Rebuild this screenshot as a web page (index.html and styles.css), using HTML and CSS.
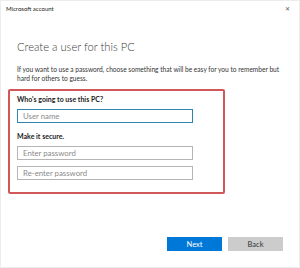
FILE: index.html
```html
<!DOCTYPE html>
<html lang="en">
<head>
    <meta charset="UTF-8">
    <title>Microsoft account</title>
    <link rel="stylesheet" href="styles.css">
</head>
<body>
    <div class="window">
        <!-- Barre de titre -->
        <div class="titlebar">
            <span class="title">Microsoft account</span>
            <span class="close">&#x2715;</span>
        </div>

        <div class="content">
            <h1>Create a user for this PC</h1>
            <p class="intro">If you want to use a password, choose something that will be easy for you to remember but hard for others to guess.</p>

            <!-- Formulaire encadré -->
            <div class="highlight">
                <label class="field-label">Who's going to use this PC?</label>
                <input type="text" class="field focused" placeholder="User name">

                <label class="field-label secure">Make it secure.</label>
                <input type="password" class="field" placeholder="Enter password">
                <input type="password" class="field" placeholder="Re-enter password">
            </div>
        </div>

        <div class="actions">
            <button class="btn primary">Next</button>
            <button class="btn">Back</button>
        </div>
    </div>
</body>
</html>
```

FILE: styles.css
```css
/* Styles généraux */
body {
    margin: 0;
    font-family: Lato, "Open Sans", sans-serif;
    background: #fff;
    color: #222;
}

.window {
    width: 300px;
    height: 268px;
    box-sizing: border-box;
    border: 1px solid #ededed;
    display: flex;
    flex-direction: column;
}

/* Barre de titre */
.titlebar {
    height: 14px;
    display: flex;
    justify-content: space-between;
    align-items: center;
    padding: 0 9px 0 5px;
}

.title {
    font-size: 6px;
    color: #222;
}

.close {
    font-size: 6px;
    color: #555;
}

/* Contenu */
.content {
    padding: 0 14px 0 7px;
}

h1 {
    font-size: 11.2px;
    font-weight: 300;
    color: #3a3a3a;
    line-height: 16px;
    margin: 24px 0 0 9px;
}

.intro {
    font-size: 6.6px;
    line-height: 9px;
    color: #333;
    margin: 10px 0 0 9px;
}

/* Cadre rouge */
.highlight {
    margin-top: 6px;
    border: 2px solid #d0575a;
    border-radius: 2px;
    width: 206px;
    height: 98px;
    padding: 3px 0 0 7px;
    display: flex;
    flex-direction: column;
    align-items: flex-start;
}

.field-label {
    font-size: 7px;
    font-weight: bold;
    line-height: 10px;
    color: #222;
}

.field-label.secure {
    margin-top: 8px;
}

.field {
    width: 176px;
    height: 14px;
    box-sizing: border-box;
    border: 1px solid #b5b5b5;
    font-family: inherit;
    font-size: 7.8px;
    padding: 0 5px;
    margin-top: 6px;
    outline: none;
}

.field::placeholder {
    color: #8a8a8a;
}

.field.focused {
    border-color: #2c86b0;
}

.field-label + .field {
    margin-top: 5px;
}

/* Boutons */
.actions {
    margin-top: auto;
    margin-bottom: 16px;
    display: flex;
    justify-content: flex-end;
    gap: 6px;
    padding-right: 16px;
}

.btn {
    width: 55px;
    height: 14px;
    border: none;
    font-family: inherit;
    font-size: 7.5px;
    background: #cccccc;
    color: #333;
    padding: 0;
}

.btn.primary {
    background: #0078d7;
    color: #fff;
}
```
